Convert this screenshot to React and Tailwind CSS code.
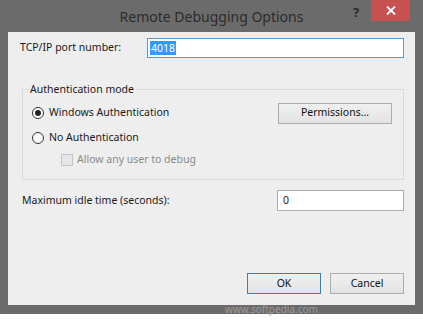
import React from 'react';

const font = { fontFamily: '"Noto Sans", "Open Sans", sans-serif' };

function Radio({ checked }) {
  return (
    <span className="w-[12px] h-[12px] rounded-full border border-[#333] bg-white flex items-center justify-center shrink-0">
      {checked && <span className="w-[6px] h-[6px] rounded-full bg-[#222]" />}
    </span>
  );
}

function Button({ children, primary, className = '' }) {
  return (
    <button
      className={`h-[21px] border bg-gradient-to-b from-[#f0f0f0] to-[#e3e3e3] text-[10.5px] text-[#111] flex items-center justify-center ${
        primary ? 'border-[#3c7fb1]' : 'border-[#acacac]'
      } ${className}`}
    >
      {children}
    </button>
  );
}

export default function App() {
  return (
    <div className="w-[423px] h-[326px] bg-white overflow-hidden" style={font}>
      <div className="w-[423px] h-[314px] bg-[#6b6b6b] flex flex-col relative">
        {/* Title bar */}
        <div className="h-[32px] flex items-center justify-center relative">
          <span className="text-[14px] text-[#2b2b2b] leading-none pt-[1px]">Remote Debugging Options</span>
          <span className="absolute left-[353px] top-[3px] text-[13px] font-bold text-[#2a2a2a]">?</span>
          <div className="absolute left-[371px] top-0 w-[39px] h-[21px] bg-[#c75050] flex items-center justify-center">
            <svg width="10" height="9" viewBox="0 0 10 9">
              <path d="M1 0.5 L9 8.5 M9 0.5 L1 8.5" stroke="white" strokeWidth="1.8" />
            </svg>
          </div>
        </div>

        {/* Client area */}
        <div className="mx-[8px] h-[273px] bg-[#eeeeee] text-[10.5px] text-[#1a1a1a] flex flex-col">
          <div className="flex items-center mt-[6px] h-[20px]">
            <span className="ml-[12px] w-[127px]">TCP/IP port number:</span>
            <div className="w-[257px] h-[20px] border border-[#5c9ad4] bg-white flex items-center pl-[2px]">
              <span className="bg-[#3399ff] text-white px-[1px] leading-[14px]">4018</span>
            </div>
          </div>

          {/* Group box */}
          <div className="ml-[14px] w-[382px] mt-[31px] h-[91px] border border-[#d9d9d9] relative flex flex-col">
            <span className="absolute left-[5px] top-[-9px] px-[2px] bg-[#eeeeee] leading-[16px]">Authentication mode</span>
            <div className="flex items-center mt-[13px] h-[20px]">
              <div className="ml-[9px] flex items-center gap-[5px] w-[246px]">
                <Radio checked />
                <span>Windows Authentication</span>
              </div>
              <Button className="w-[114px]">Permissions...</Button>
            </div>
            <div className="flex items-center mt-[5px] h-[20px] ml-[9px] gap-[5px]">
              <Radio />
              <span>No Authentication</span>
            </div>
            <div className="flex items-center mt-[4px] h-[16px] ml-[38px] gap-[4px]">
              <span className="w-[12px] h-[12px] border border-[#c4c4c4] bg-[#e6e6e6]" />
              <span className="text-[#8a8a8a]">Allow any user to debug</span>
            </div>
          </div>

          <div className="flex items-center mt-[10px] h-[21px]">
            <span className="ml-[14px] w-[255px]">Maximum idle time (seconds):</span>
            <div className="w-[127px] h-[21px] border border-[#acacac] bg-white flex items-center pl-[5px]">0</div>
          </div>

          <div className="flex justify-end gap-[9px] mt-auto mb-[11px] mr-[11px]">
            <Button primary className="w-[74px]">OK</Button>
            <Button className="w-[74px]">Cancel</Button>
          </div>
        </div>

        <div className="flex-1 flex justify-center items-start pl-[120px]">
          <span className="text-[10px] leading-[9px] text-[#9a9a9a]">www.softpedia.com</span>
        </div>
      </div>
    </div>
  );
}
